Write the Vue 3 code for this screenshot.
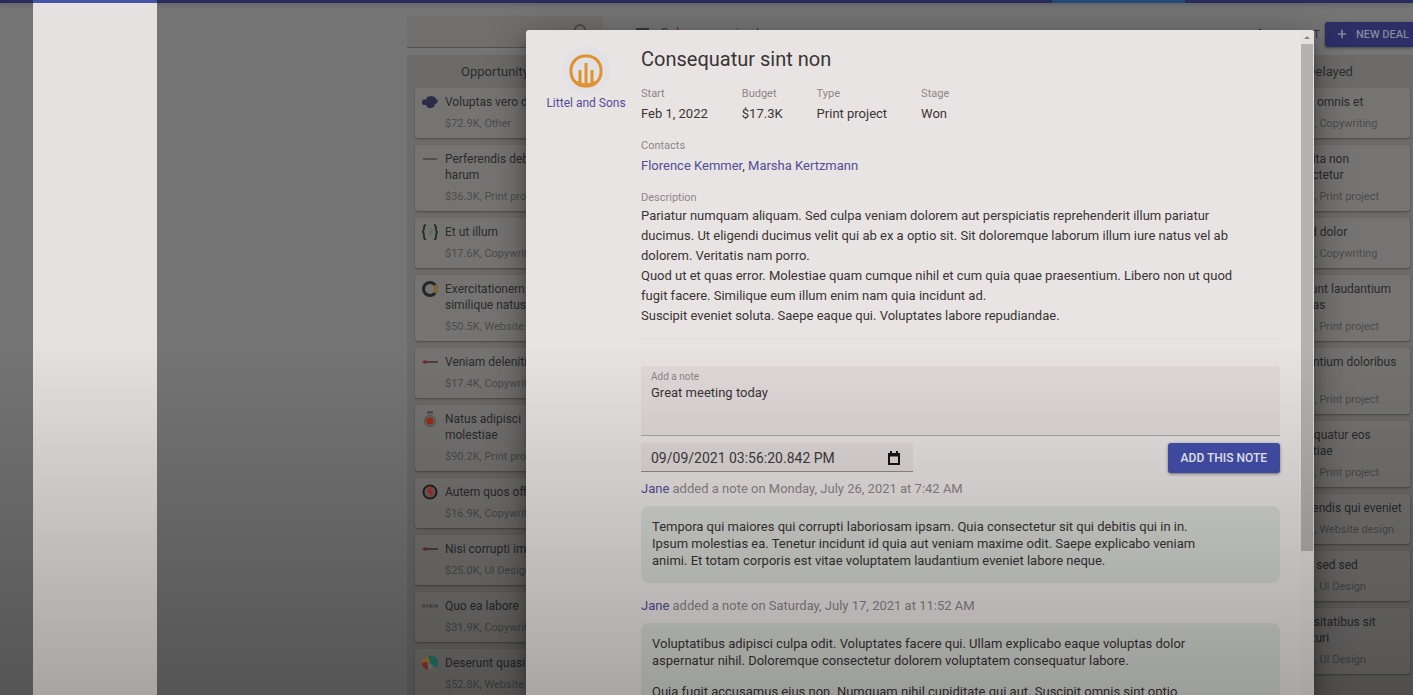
<script setup>
import { ref } from 'vue'

const note = ref('Great meeting today')
const noteDate = ref('09/09/2021 03:56:20.842 PM')

const opportunity = [
  { icon: 'blob', title: ['Voluptas vero dolor'], meta: '$72.9K, Other' },
  { icon: 'dash', title: ['Perferendis debitis', 'harum'], meta: '$36.3K, Print project' },
  { icon: 'braces', title: ['Et ut illum'], meta: '$17.6K, Copywriting' },
  { icon: 'ring', title: ['Exercitationem', 'similique natus'], meta: '$50.5K, Website design' },
  { icon: 'reddash', title: ['Veniam deleniti'], meta: '$17.4K, Copywriting' },
  { icon: 'medal', title: ['Natus adipisci', 'molestiae'], meta: '$90.2K, Print project' },
  { icon: 'bolt', title: ['Autem quos officiis'], meta: '$16.9K, Copywriting' },
  { icon: 'reddash', title: ['Nisi corrupti impedit'], meta: '$25.0K, UI Design' },
  { icon: 'word', title: ['Quo ea labore'], meta: '$31.9K, Copywriting' },
  { icon: 'swirl', title: ['Deserunt quasi'], meta: '$52.8K, Website design' }
]
const delayed = [
  { icon: 'dash', title: ['Soluta omnis et'], meta: '$41.2K, Copywriting' },
  { icon: 'ring', title: ['Expedita non', 'consectetur'], meta: '$28.6K, Print project' },
  { icon: 'dash', title: ['Aliquid dolor'], meta: '$63.1K, Copywriting' },
  { icon: 'blob', title: ['Deserunt laudantium', 'voluptas'], meta: '$19.8K, Print project' },
  { icon: 'dash', title: ['Laudantium doloribus', 'quo'], meta: '$75.3K, Print project' },
  { icon: 'medal', title: ['Consequatur eos', 'molestiae'], meta: '$34.7K, Print project' },
  { icon: 'dash', title: ['Perferendis qui eveniet'], meta: '$22.9K, Website design' },
  { icon: 'bolt', title: ['Fugiat sed sed'], meta: '$58.4K, UI Design' },
  { icon: 'swirl', title: ['Necessitatibus sit', 'excepturi'], meta: '$46.0K, UI Design' }
]
const columns = [
  { name: 'Opportunity', deals: opportunity },
  { name: 'Proposal Sent', deals: [] },
  { name: 'In Negotiation', deals: [] },
  { name: 'Won', deals: [] },
  { name: 'Lost', deals: [] },
  { name: 'Delayed', deals: delayed }
]

const facts = [
  { label: 'Start', value: 'Feb 1, 2022' },
  { label: 'Budget', value: '$17.3K' },
  { label: 'Type', value: 'Print project' },
  { label: 'Stage', value: 'Won' }
]
const description = [
  'Pariatur numquam aliquam. Sed culpa veniam dolorem aut perspiciatis reprehenderit illum pariatur',
  'ducimus. Ut eligendi ducimus velit qui ab ex a optio sit. Sit doloremque laborum illum iure natus vel ab',
  'dolorem. Veritatis nam porro.',
  'Quod ut et quas error. Molestiae quam cumque nihil et cum quia quae praesentium. Libero non ut quod',
  'fugit facere. Similique eum illum enim nam quia incidunt ad.',
  'Suscipit eveniet soluta. Saepe eaque qui. Voluptates labore repudiandae.'
]
const notes = [
  {
    author: 'Jane',
    when: 'added a note on Monday, July 26, 2021 at 7:42 AM',
    paragraphs: [[
      'Tempora qui maiores qui corrupti laboriosam ipsam. Quia consectetur sit qui debitis qui in in.',
      'Ipsum molestias ea. Tenetur incidunt id quia aut veniam maxime odit. Saepe explicabo veniam',
      'animi. Et totam corporis est vitae voluptatem laudantium eveniet labore neque.'
    ]]
  },
  {
    author: 'Jane',
    when: 'added a note on Saturday, July 17, 2021 at 11:52 AM',
    paragraphs: [[
      'Voluptatibus adipisci culpa odit. Voluptates facere qui. Ullam explicabo eaque voluptas dolor',
      'aspernatur nihil. Doloremque consectetur dolorem voluptatem consequatur labore.'
    ], [
      'Quia fugit accusamus eius non. Numquam nihil cupiditate qui aut. Suscipit omnis sint optio'
    ]]
  }
]
</script>

<template>
  <div class="page">
    <header class="topbar"><span class="tab-indicator"></span></header>

    <main class="deals">
      <div class="toolbar">
        <label class="search">
          <input type="text" aria-label="Search" />
          <svg viewBox="0 0 16 16"><circle cx="7" cy="6" r="5" /><path d="M11 10l4 4" /></svg>
        </label>
        <span class="filter-icon"></span>
        <span class="filter-label">Only companies I manage</span>
        <span class="toolbar-gap"></span>
        <svg class="export-icon" viewBox="0 0 10 10"><path d="M5 0v8M2 5l3 3 3-3" /></svg>
        <span class="export-label">Export</span>
        <button class="new-deal" type="button">
          <svg viewBox="0 0 12 12"><path d="M6 1v10M1 6h10" /></svg>New deal
        </button>
      </div>

      <div class="board">
        <section v-for="col in columns" :key="col.name" class="column">
          <h2>{{ col.name }}</h2>
          <article v-for="deal in col.deals" :key="deal.title[0]" class="card">
            <svg class="logo" viewBox="0 0 16 16">
              <path v-if="deal.icon === 'blob'" d="M0 7l2-2 2 1 1-3 4-1 4 1 1 2 2 1-1 3-2 1-1 3-3 1H6l-2-3-3 0-1-2z" fill="#2b2d48" />
              <path v-else-if="deal.icon === 'dash'" d="M1 8h14" stroke="#454545" stroke-width="2" opacity=".7" />
              <template v-else-if="deal.icon === 'braces'">
                <path d="M4 1Q2 1 2 4T0 8Q2 8 2 12T4 15M12 1q2 0 2 4t2 3q-2 0-2 4t-2 3" fill="none" stroke="#2c302f" stroke-width="2" />
                <path d="M6 5h4v3H7h3v3H6" fill="none" stroke="#4f706b" stroke-width="1" />
              </template>
              <template v-else-if="deal.icon === 'ring'">
                <circle cx="8" cy="8" r="6.5" fill="none" stroke="#242628" stroke-width="3" />
                <path d="M13 4a6.500 6.500 0 0 1 0 8" fill="none" stroke="#876829" stroke-width="3" />
              </template>
              <template v-else-if="deal.icon === 'reddash'">
                <path d="M4 8h12" stroke="#4d3d3d" stroke-width="2" />
                <path d="M0 8l3-2 3 2-3 2z" fill="#6e2c2e" />
              </template>
              <template v-else-if="deal.icon === 'medal'">
                <path d="M5 0h6v3H5z" fill="#4c5253" />
                <circle cx="8" cy="10" r="5.500" fill="#6b6663" stroke="#525350" />
                <circle cx="8" cy="10" r="3.500" fill="#9a2d18" />
              </template>
              <template v-else-if="deal.icon === 'bolt'">
                <circle cx="8" cy="8" r="6.500" fill="#6b6060" stroke="#261f20" stroke-width="2" />
                <path d="M7 2L5 8l3 1-1 5 5-6-3-1 1-4z" fill="#a03028" />
              </template>
              <path v-else-if="deal.icon === 'word'" d="M0 8h3m1 0h2m1 0h4m1 0h4" stroke="#3d3c3c" stroke-width="3" opacity=".6" />
              <template v-else>
                <path d="M8 1a8 7 0 0 0-8 8l5 0 3-3z" fill="#a8742e" />
                <path d="M6 1a8 8 0 0 1 9 12L9 9z" fill="#237a70" />
                <path d="M0 8l5-1 1 8a8 8 0 0 1-6-7z" fill="#963030" />
                <path d="M6 8l4 2 0 5-4-1z" fill="#858380" />
              </template>
            </svg>
            <div class="card-text">
              <h3><span v-for="line in deal.title" :key="line">{{ line }}</span></h3>
              <p>{{ deal.meta }}</p>
            </div>
          </article>
        </section>
      </div>
    </main>

    <div class="overlay">
      <div class="dialog" role="dialog" aria-labelledby="deal-title">
        <div class="content">
          <aside class="company">
            <div class="avatar">
              <svg viewBox="0 0 34 34">
                <rect x="2" y="2" width="30" height="30" rx="14" />
                <path d="M11 16v14M17 9v22M23 16v14" />
                <path d="M8 28q9 6 18 0" />
              </svg>
            </div>
            <a href="#">Littel and Sons</a>
          </aside>

          <div class="details">
            <h1 id="deal-title">Consequatur sint non</h1>
            <dl class="facts">
              <div v-for="fact in facts" :key="fact.label">
                <dt>{{ fact.label }}</dt>
                <dd>{{ fact.value }}</dd>
              </div>
            </dl>
            <div class="block">
              <div class="caption">Contacts</div>
              <div class="contacts"><a href="#">Florence Kemmer</a>, <a href="#">Marsha Kertzmann</a></div>
            </div>
            <div class="block">
              <div class="caption">Description</div>
              <p class="description"><span v-for="line in description" :key="line">{{ line }}</span></p>
            </div>
            <hr />

            <form @submit.prevent>
              <div class="note-field">
                <label for="note">Add a note</label>
                <textarea id="note" v-model="note"></textarea>
              </div>
              <div class="note-actions">
                <div class="date-field">
                  <input v-model="noteDate" type="text" aria-label="Note date" />
                  <button class="picker" type="button" aria-label="Pick a date">
                    <svg viewBox="0 0 14 15"><path d="M2 3h10v10H2z" /><path d="M1 4h12" class="bar" /><path d="M4 0v3M10 0v3" /></svg>
                  </button>
                </div>
                <button class="submit" type="submit">Add this note</button>
              </div>
            </form>

            <section v-for="item in notes" :key="item.when" class="note">
              <div class="byline"><a href="#">{{ item.author }}</a> {{ item.when }}</div>
              <div class="note-body">
                <p v-for="(para, i) in item.paragraphs" :key="i">
                  <span v-for="line in para" :key="line">{{ line }}</span>
                </p>
              </div>
            </section>
          </div>
        </div>
        <div class="scrollbar">
          <span class="arrow"></span>
          <span class="thumb"></span>
        </div>
      </div>
    </div>

    <div class="strip"></div>
    <div class="shade"></div>
  </div>
</template>

<style>
body {
  background: #757575;
}
</style>

<style scoped>
* {
  box-sizing: border-box;
}
.page {
  position: relative;
  height: 100vh;
  overflow: hidden;
  background: #757575;
  color: #2b2b2b;
  font-family: Roboto, "Liberation Sans", sans-serif;
  font-size: 13px;
}
h1, h2, h3, p, dl, dd {
  margin: 0;
  font-weight: 400;
}
a {
  color: #524d96;
  text-decoration: none;
}
.topbar {
  display: flex;
  justify-content: flex-end;
  height: 3px;
  padding-right: 228px;
  background: #282c5c;
  box-shadow: 0 1px 5px #555;
}
.tab-indicator {
  width: 133px;
  background: #28497c;
}
.deals {
  margin-left: 407px;
}
.toolbar {
  display: flex;
  align-items: center;
  height: 52px;
  padding-top: 10px;
}
.search {
  display: flex;
  align-items: center;
  width: 196px;
  height: 32px;
  margin-bottom: 4px;
  padding-right: 14px;
  border-bottom: 1px solid #505050;
  border-radius: 3px 3px 0 0;
  background: #706f6e;
}
.search input {
  width: 100%;
  min-width: 0;
  border: 0;
  background: none;
}
.search svg {
  width: 16px;
  height: 16px;
  flex: none;
  fill: none;
  stroke: #4c4c4c;
  stroke-width: 2;
}
.filter-icon {
  width: 13px;
  height: 9px;
  margin: 0 11px 4px 33px;
  border-top: 3px solid #383838;
  border-bottom: 2px solid #383838;
}
.filter-label {
  margin-bottom: 4px;
  color: #3a3a3a;
}
.toolbar-gap {
  flex: 1;
}
.export-icon {
  width: 10px;
  height: 10px;
  margin-right: 14px;
  fill: none;
  stroke: #282828;
  stroke-width: 2;
}
.export-label {
  margin-right: 5px;
  font-size: 11px;
  text-transform: uppercase;
}
.new-deal {
  display: flex;
  align-items: center;
  gap: 9px;
  height: 25px;
  padding: 0 4px 0 12px;
  border: 0;
  border-radius: 3px 0 0 3px;
  background: #2b2f65;
  box-shadow: 0 1px 3px #444;
  color: #85879b;
  font: 500 11px Roboto, sans-serif;
  text-transform: uppercase;
}
.new-deal svg {
  width: 10px;
  height: 10px;
  stroke: currentColor;
  stroke-width: 2;
}
.board {
  display: grid;
  grid-template-columns: repeat(6, 1fr);
  gap: 7px;
  min-height: 700px;
  padding: 0 3px 0 8px;
  border-radius: 3px 0 0 0;
  background: #6c6b6a;
}
.column {
  min-width: 0;
}
.column h2 {
  padding: 8px 0;
  font-size: 13px;
  line-height: 17px;
  text-align: center;
}
.card {
  display: flex;
  gap: 7px;
  margin-bottom: 7px;
  padding: 6px 0 6px 7px;
  border-radius: 3px;
  background: #757473;
  box-shadow: 0 1px 2px #4a4a4a;
}
.logo {
  flex: none;
  width: 16px;
  height: 16px;
}
.card-text {
  min-width: 0;
  overflow: hidden;
  white-space: nowrap;
}
.card h3 {
  font-size: 12px;
  line-height: 16px;
}
.card h3 span,
.description span,
.note-body span {
  display: block;
}
.card p {
  margin-top: 6px;
  color: #4c4c4c;
  font-size: 11px;
  line-height: 16px;
}
.overlay {
  position: absolute;
  inset: 0;
  display: flex;
  padding: 30px 99px 0 526px;
}
.dialog {
  display: flex;
  flex: 1;
  min-width: 0;
  overflow: hidden;
  border-radius: 3px 3px 0 0;
  background: #e9e4e4;
  box-shadow: 0 9px 38px rgba(0, 0, 0, .4), 0 9px 12px rgba(0, 0, 0, .2);
}
.content {
  display: flex;
  flex: 1;
  min-width: 0;
  padding: 16px 21px 0 15px;
  color: #383435;
}
.company {
  display: flex;
  flex: none;
  flex-direction: column;
  align-items: center;
  width: 100px;
  padding-right: 10px;
  font-size: 12px;
  line-height: 16px;
  white-space: nowrap;
}
.avatar {
  display: grid;
  place-items: center;
  width: 49px;
  height: 49px;
  border-radius: 50%;
  background: #e2e2e5;
}
.avatar svg {
  width: 34px;
  height: 34px;
  fill: none;
  stroke: #df922f;
  stroke-width: 3;
}
.details {
  flex: 1;
  min-width: 0;
}
h1 {
  font-size: 20px;
  line-height: 26px;
}
.facts {
  display: flex;
  gap: 34px;
  margin-top: 14px;
}
dt,
.caption {
  color: #8c8786;
  font-size: 11px;
  line-height: 16px;
}
dd,
.contacts {
  margin-top: 2px;
  line-height: 20px;
}
.block {
  margin-top: 14px;
}
.description {
  line-height: 20px;
}
hr {
  margin: 12px 0 27px;
  border: 0;
  border-top: 1px solid #e1dcdc;
}
.note-field {
  display: flex;
  flex-direction: column;
  height: 70px;
  padding: 5px 10px 4px;
  border-bottom: 1px solid #b0a6a7;
  border-radius: 3px 3px 0 0;
  background: #e1dada;
}
.note-field label {
  color: #8c8585;
  font-size: 10px;
  line-height: 12px;
}
.note-field textarea {
  flex: 1;
  padding: 0;
  border: 0;
  outline: 0;
  background: none;
  color: inherit;
  font: 13px/20px Roboto, sans-serif;
  resize: none;
}
.note-actions {
  display: flex;
  align-items: flex-start;
  justify-content: space-between;
  margin-top: 7px;
}
.date-field {
  display: flex;
  align-items: center;
  width: 272px;
  height: 29px;
  padding: 2px 12px 0 10px;
  border-bottom: 1px solid #8f8b8b;
  background: #e0dada;
}
.date-field input {
  flex: 1;
  min-width: 0;
  padding: 0;
  border: 0;
  outline: 0;
  background: none;
  color: #3f3b3b;
  font: 14px Roboto, sans-serif;
}
.picker {
  display: flex;
  padding: 0;
  border: 0;
  background: none;
}
.picker svg {
  width: 14px;
  height: 15px;
  fill: none;
  stroke: #161616;
  stroke-width: 2;
}
.picker .bar {
  stroke-width: 3;
}
.submit {
  height: 30px;
  padding: 0 13px;
  border: 0;
  border-radius: 3px;
  background: #4450ad;
  box-shadow: 0 1px 3px #777;
  color: #f4f2fa;
  font: 500 12px Roboto, sans-serif;
  text-transform: uppercase;
}
.byline {
  margin: 6px 0 7px;
  color: #8a8585;
  line-height: 20px;
}
.note-body {
  margin-bottom: 13px;
  padding: 12px 11px 14px;
  border-radius: 8px;
  background: #d6d8d3;
  line-height: 17px;
}
.note-body p + p {
  margin-top: 14px;
}
.scrollbar {
  flex: none;
  width: 13px;
  padding-right: 1px;
  background: #e5e1e1;
}
.arrow {
  display: block;
  width: 6px;
  margin: 6px 3px 5px;
  border: 3px solid transparent;
  border-top: 0;
  border-bottom: 3px solid #888;
}
.thumb {
  display: block;
  height: 507px;
  background: #b5b2b1;
}
.shade {
  position: absolute;
  inset: 340px 0 0;
  background: linear-gradient(rgba(0, 0, 0, 0), rgba(0, 0, 0, .27));
  pointer-events: none;
}
.strip {
  position: absolute;
  inset: 0 auto 0 33px;
  width: 124px;
  border-top: 3px solid #4855a6;
  background: #e5e1e0;
}
</style>
